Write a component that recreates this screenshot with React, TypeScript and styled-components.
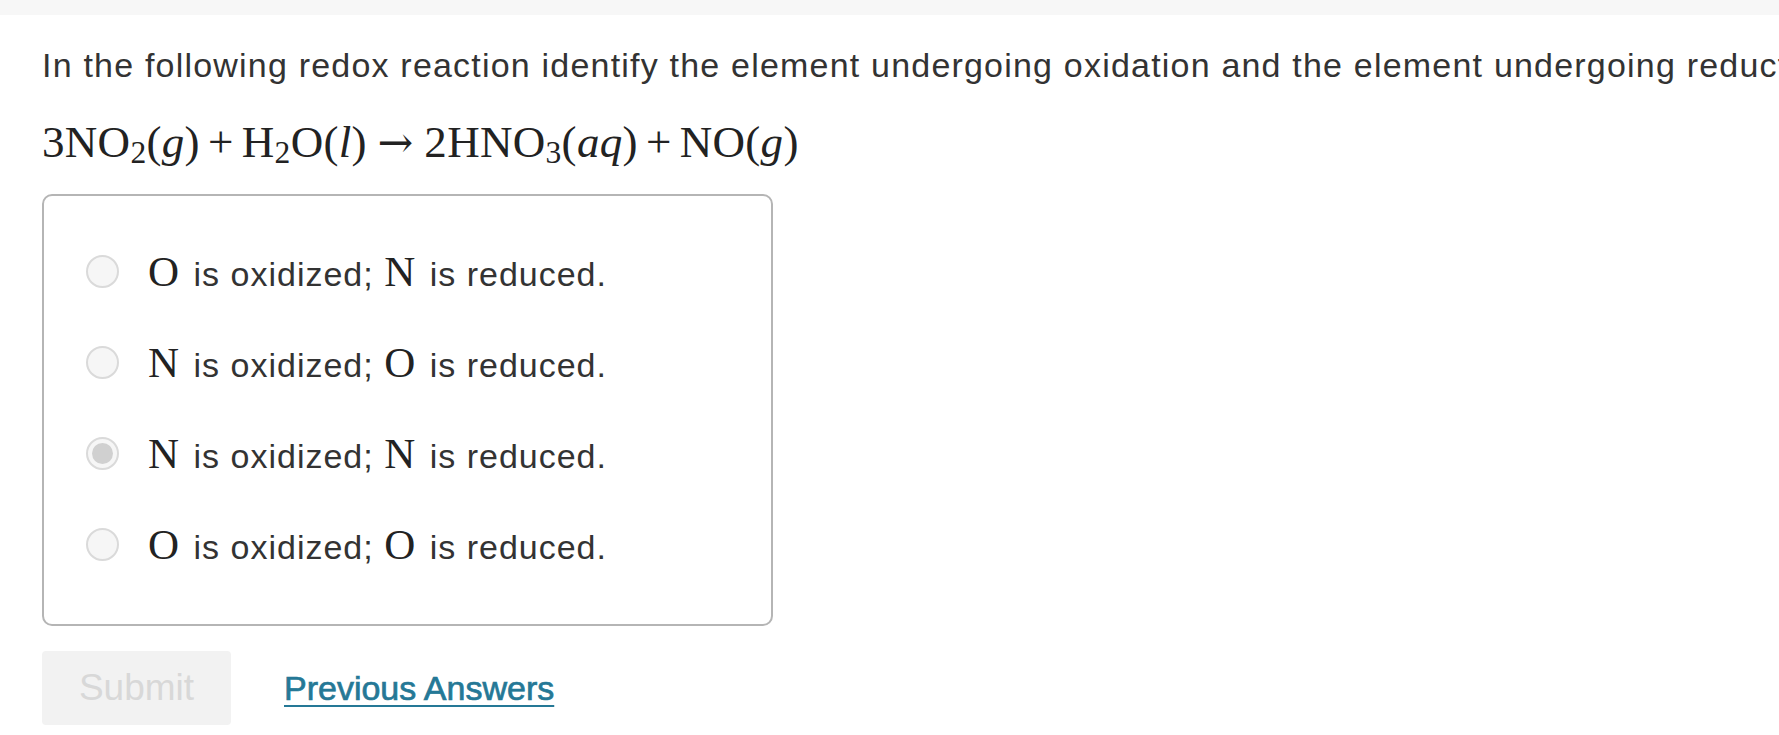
import React from "react";
import styled, { createGlobalStyle } from "styled-components";

const Global = createGlobalStyle`
  html, body { margin: 0; padding: 0; background: #ffffff; overflow: hidden; }
  body { font-family: "Liberation Sans", Arial, sans-serif; color: #333333; }
`;

const TopBar = styled.div`
  height: 15px;
  background: #f7f7f7;
`;

const Content = styled.main`
  padding: 0 0 0 42px;
  display: flex;
  flex-direction: column;
  align-items: flex-start;
`;

const Question = styled.p`
  margin: 27px 0 0 0;
  font-size: 34px;
  line-height: 46px;
  letter-spacing: 1.2px;
  white-space: nowrap;
  color: #333333;
`;

const Equation = styled.div`
  margin-top: 28px;
  font-family: "Liberation Serif", "Times New Roman", serif;
  font-size: 45px;
  line-height: 52px;
  color: #222222;
  white-space: nowrap;
  letter-spacing: 0.3px;
`;

const Sub = styled.sub`
  font-size: 0.7em;
  vertical-align: -0.2em;
  line-height: 0;
`;

const Var = styled.i`
  font-style: italic;
`;

const Op = styled.span`
  margin: 0 0.18em;
`;

const Arrow = styled.span`
  font-family: "DejaVu Serif", serif;
  font-size: 0.95em;
  margin: 0 0.25em;
`;

const ChoiceBox = styled.fieldset`
  margin: 26px 0 0 0;
  box-sizing: border-box;
  width: 731px;
  padding: 30px 0 34px 42px;
  border: 2px solid #b5b5b5;
  border-radius: 10px;
  display: flex;
  flex-direction: column;
`;

const ChoiceRow = styled.label`
  height: 91px;
  display: flex;
  align-items: center;
  gap: 29px;
  cursor: pointer;
`;

const Radio = styled.span<{ $checked?: boolean }>`
  box-sizing: border-box;
  width: 33px;
  height: 33px;
  border-radius: 50%;
  border: 2.5px solid #dadada;
  background: #f6f6f6;
  display: flex;
  align-items: center;
  justify-content: center;
  flex-shrink: 0;
  &::after {
    content: "";
    display: ${(p) => (p.$checked ? "block" : "none")};
    width: 21px;
    height: 21px;
    border-radius: 50%;
    background: #d0d0d0;
  }
`;

const ChoiceLabel = styled.span`
  font-size: 34px;
  letter-spacing: 1px;
  color: #333333;
  white-space: nowrap;
`;

const Sym = styled.span`
  font-family: "Liberation Serif", "Times New Roman", serif;
  font-size: 43px;
  letter-spacing: 0;
  color: #222222;
  margin-right: 4px;
`;

const Actions = styled.div`
  margin-top: 25px;
  display: flex;
  align-items: center;
  gap: 53px;
`;

const SubmitButton = styled.button`
  box-sizing: border-box;
  width: 189px;
  height: 74px;
  border: none;
  border-radius: 4px;
  background: #f2f2f2;
  color: #d8d8d8;
  font-family: "Liberation Sans", Arial, sans-serif;
  font-size: 37px;
  padding: 0;
`;

const PrevLink = styled.a`
  font-size: 34px;
  font-weight: 400;
  -webkit-text-stroke: 0.7px #257896;
  color: #257896;
  text-decoration: underline;
  text-underline-offset: 5px;
  text-decoration-thickness: 2px;
  cursor: pointer;
`;

const choices: { a: string; b: string; checked?: boolean }[] = [
  { a: "O", b: "N" },
  { a: "N", b: "O" },
  { a: "N", b: "N", checked: true },
  { a: "O", b: "O" },
];

export default function App() {
  return (
    <>
      <Global />
      <TopBar />
      <Content>
        <Question>
          In the following redox reaction identify the element undergoing oxidation and the element undergoing reduction.
        </Question>
        <Equation>
          3NO<Sub>2</Sub>(<Var>g</Var>)<Op>+</Op>H<Sub>2</Sub>O(<Var>l</Var>)<Arrow>→</Arrow>2HNO<Sub>3</Sub>(<Var>aq</Var>)<Op>+</Op>NO(<Var>g</Var>)
        </Equation>
        <ChoiceBox>
          {choices.map((c, i) => (
            <ChoiceRow key={i}>
              <Radio $checked={c.checked} />
              <ChoiceLabel>
                <Sym>{c.a}</Sym> is oxidized; <Sym>{c.b}</Sym> is reduced.
              </ChoiceLabel>
            </ChoiceRow>
          ))}
        </ChoiceBox>
        <Actions>
          <SubmitButton disabled>Submit</SubmitButton>
          <PrevLink>Previous Answers</PrevLink>
        </Actions>
      </Content>
    </>
  );
}
